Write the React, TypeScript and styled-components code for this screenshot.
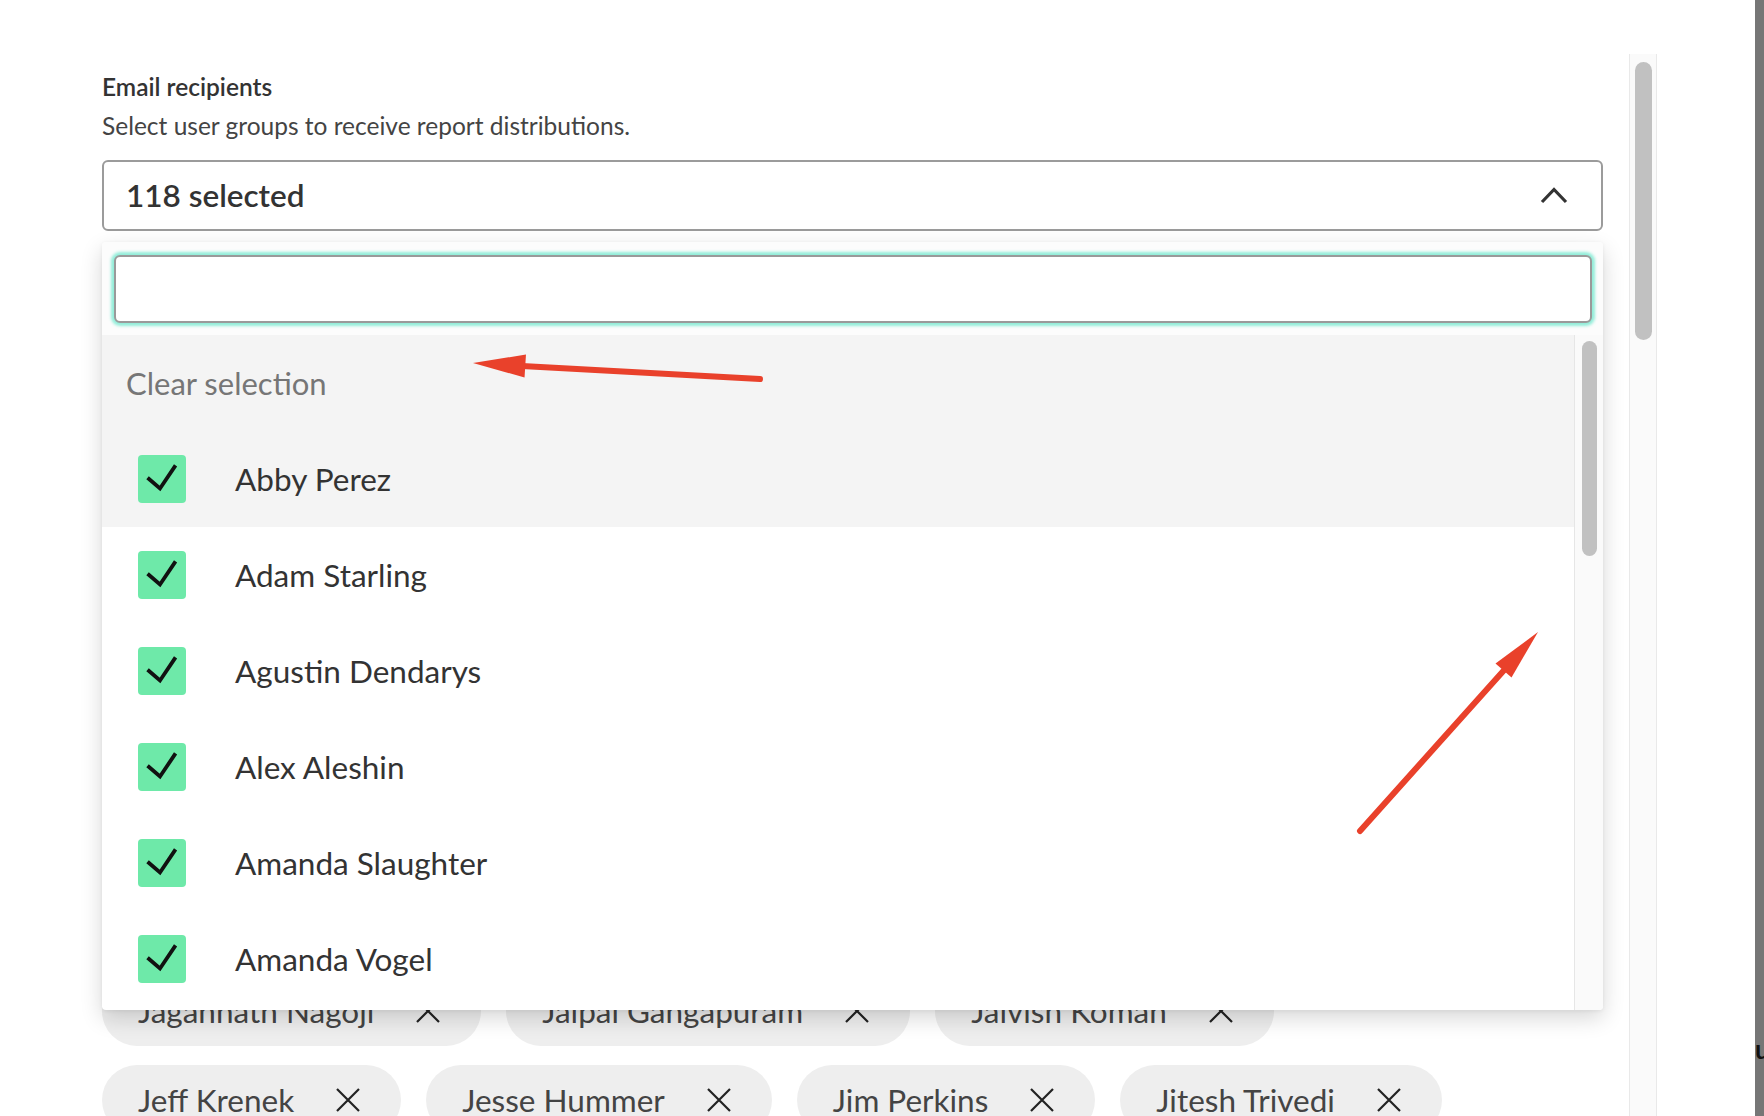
import React from "react";
import styled, { createGlobalStyle } from "styled-components";

const GlobalStyle = createGlobalStyle`
  html, body { margin: 0; padding: 0; background: #fff; }
  body { font-family: Lato, "Open Sans", "Noto Sans", sans-serif; color: #333; }
  * { box-sizing: border-box; }
`;

const Page = styled.div`
  position: relative;
  width: 1764px;
  height: 1116px;
  overflow: hidden;
  display: flex;
  background: #fff;
`;

const Content = styled.main`
  flex: none;
  width: 1629px;
  padding: 73px 26px 0 102px;
`;

const Label = styled.div`
  font-size: 24.5px;
  line-height: 28px;
  font-weight: 600;
  color: #333;
`;

const Description = styled.div`
  margin-top: 11px;
  font-size: 24.5px;
  line-height: 28px;
  color: #444;
`;

const Field = styled.div`
  position: relative;
  margin-top: 20px;
`;

const SelectBox = styled.div`
  height: 71px;
  border: 2px solid #9b9b9b;
  border-radius: 6px;
  display: flex;
  align-items: center;
  justify-content: space-between;
  padding: 0 32px 2px 22px;
  background: #fff;
`;

const SelectValue = styled.span`
  font-size: 31.5px;
  font-weight: 600;
  color: #333;
`;

const Panel = styled.div`
  position: absolute;
  top: calc(100% + 11px);
  left: 0;
  right: 0;
  height: 768px;
  background: #fff;
  border-radius: 4px;
  overflow: hidden;
  box-shadow: 0 8px 22px rgba(0, 0, 0, 0.16), 0 1px 4px rgba(0, 0, 0, 0.06);
  z-index: 10;
`;

const SearchArea = styled.div`
  padding: 13px 11px 12px 12px;
  background: #fcfcfc;
`;

const SearchInput = styled.input`
  display: block;
  width: 100%;
  height: 68px;
  border: 2px solid #9a9a9a;
  border-radius: 6px;
  background: #fff;
  outline: none;
  box-shadow: 0 0 3px 3px rgba(111, 232, 205, 0.75);
  font: inherit;
  font-size: 28px;
  padding: 0 20px;
`;

const List = styled.div`
  display: flex;
  height: 675px;
`;

const Options = styled.div`
  flex: 1;
  display: flex;
  flex-direction: column;
  overflow: hidden;
`;

const Row = styled.div<{ $active?: boolean; $clear?: boolean }>`
  flex: none;
  height: 96px;
  display: flex;
  align-items: center;
  padding-left: ${(p) => (p.$clear ? "24px" : "36px")};
  background: ${(p) => (p.$active ? "#f4f4f4" : "#fff")};
  font-size: ${(p) => (p.$clear ? "31px" : "31.5px")};
  color: ${(p) => (p.$clear ? "#767676" : "#333")};
`;

const Checkbox = styled.span`
  flex: none;
  width: 48px;
  height: 48px;
  margin-right: 49px;
  border-radius: 4px;
  background: #6ee9a9;
  display: flex;
  align-items: center;
  justify-content: center;
`;

const InnerTrack = styled.div`
  flex: none;
  width: 29px;
  border-left: 1px solid #e6e6e6;
  background: #fafafa;
  padding: 6px 6px 0 7px;
`;

const InnerThumb = styled.div`
  width: 15px;
  height: 215px;
  border-radius: 8px;
  background: #c1c1c1;
`;

const Chips = styled.div`
  margin-top: 33px;
  display: flex;
  flex-direction: column;
  gap: 19px;
`;

const ChipRow = styled.div`
  display: flex;
  gap: 25px;
`;

const Chip = styled.div`
  height: 70px;
  border-radius: 35px;
  background: #eeeeee;
  display: flex;
  align-items: center;
  gap: 41px;
  padding: 0 40px 0 36px;
  font-size: 31.5px;
  color: #444;
  white-space: nowrap;
`;

const OuterTrack = styled.div`
  flex: none;
  width: 28px;
  margin-top: 54px;
  border-left: 1px solid #e9e9e9;
  border-right: 1px solid #e9e9e9;
  background: #fafafa;
  padding: 8px 4px 0 5px;
`;

const OuterThumb = styled.div`
  width: 17px;
  height: 278px;
  border-radius: 9px;
  background: #c1c1c1;
`;

const Spacer = styled.div`
  flex: 1;
`;

const DarkStrip = styled.div`
  flex: none;
  width: 9px;
  background: #767676;
  padding-top: 1036px;
  overflow: hidden;
  font-size: 26px;
  line-height: 1;
  color: #111;
  font-weight: 700;
`;

const Annotations = styled.svg`
  position: absolute;
  inset: 0;
  pointer-events: none;
  z-index: 20;
`;

const Check = () => (
  <svg width="48" height="48" viewBox="0 0 48 48">
    <polyline points="11,24 22,33.5 36.5,12" fill="none" stroke="#111" strokeWidth="3.8" strokeLinecap="square" strokeLinejoin="miter" />
  </svg>
);

const Chevron = () => (
  <svg width="30" height="18" viewBox="0 0 30 18">
    <polyline points="3,16 15,3.5 27,16" fill="none" stroke="#333" strokeWidth="3.2" />
  </svg>
);

const Close = () => (
  <svg width="26" height="26" viewBox="0 0 26 26">
    <path d="M2 2 L24 24 M24 2 L2 24" stroke="#222" strokeWidth="2.2" fill="none" />
  </svg>
);

const names = [
  "Abby Perez",
  "Adam Starling",
  "Agustin Dendarys",
  "Alex Aleshin",
  "Amanda Slaughter",
  "Amanda Vogel",
];

const chipRows: string[][] = [
  ["Abby Perez", "Adam Starling", "Agustin Dendarys", "Alex Aleshin"],
  ["Amanda Slaughter", "Amanda Vogel", "Andrew Blake", "Anna Chen"],
  ["Ben Carter", "Brian Lowe", "Carla Mendes", "Chris Ortega"],
  ["Dana Fields", "David Kim", "Diego Ramos", "Emily Stone"],
  ["Eric Hansen", "Fatima Noor", "Frank Miller", "Grace Liu"],
  ["Hannah Park", "Henry Adams", "Ian Walsh", "Isabel Cruz"],
  ["Jack Turner", "Jacob Reyes", "James Patel", "Jane Doyle"],
  ["Jared Cole", "Jason Wu", "Javier Soto", "Jay Morgan"],
  ["Jagannath Nagoji", "Jaipal Gangapuram", "Jaivish Koman"],
  ["Jeff Krenek", "Jesse Hummer", "Jim Perkins", "Jitesh Trivedi"],
];

export default function App() {
  return (
    <>
      <GlobalStyle />
      <Page>
        <Content>
          <Label>Email recipients</Label>
          <Description>Select user groups to receive report distributions.</Description>
          <Field>
            <SelectBox>
              <SelectValue>118 selected</SelectValue>
              <Chevron />
            </SelectBox>
            <Panel>
              <SearchArea>
                <SearchInput aria-label="Search" />
              </SearchArea>
              <List>
                <Options>
                  <Row $clear $active>Clear selection</Row>
                  {names.map((n, i) => (
                    <Row key={n} $active={i === 0}>
                      <Checkbox>
                        <Check />
                      </Checkbox>
                      {n}
                    </Row>
                  ))}
                </Options>
                <InnerTrack>
                  <InnerThumb />
                </InnerTrack>
              </List>
            </Panel>
          </Field>
          <Chips>
            {chipRows.map((row, r) => (
              <ChipRow key={r}>
                {row.map((n) => (
                  <Chip key={n}>
                    {n}
                    <Close />
                  </Chip>
                ))}
              </ChipRow>
            ))}
          </Chips>
        </Content>
        <OuterTrack>
          <OuterThumb />
        </OuterTrack>
        <Spacer />
        <DarkStrip>u</DarkStrip>
        <Annotations viewBox="0 0 1764 1116" width="1764" height="1116">
          <line x1="760" y1="379" x2="522" y2="366" stroke="#e9412b" strokeWidth="6" strokeLinecap="round" />
          <polygon points="473,363 526,354.5 524.5,377.5" fill="#e9412b" />
          <line x1="1360" y1="831" x2="1506" y2="668" stroke="#e9412b" strokeWidth="6" strokeLinecap="round" />
          <polygon points="1538,632 1495.5,663.5 1511.5,677.5" fill="#e9412b" />
        </Annotations>
      </Page>
    </>
  );
}
